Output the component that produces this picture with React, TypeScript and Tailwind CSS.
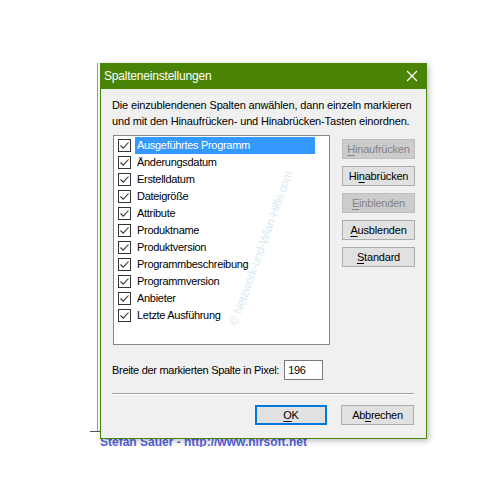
import React from "react";

const items = [
  "Ausgeführtes Programm",
  "Änderungsdatum",
  "Erstelldatum",
  "Dateigröße",
  "Attribute",
  "Produktname",
  "Produktversion",
  "Programmbeschreibung",
  "Programmversion",
  "Anbieter",
  "Letzte Ausführung",
];

function Check() {
  return (
    <span className="flex h-[13px] w-[13px] shrink-0 items-center justify-center border border-[#333] bg-white">
      <svg width="11" height="11" viewBox="0 0 11 11">
        <path d="M1.5 5.5 L4.2 8.2 L9.5 2.5" fill="none" stroke="#333" strokeWidth="1.1" />
      </svg>
    </span>
  );
}

function Btn({
  pre,
  key1,
  post,
  disabled,
}: {
  pre: string;
  key1: string;
  post: string;
  disabled?: boolean;
}) {
  return (
    <button
      className={
        disabled
          ? "h-[20px] w-[73px] whitespace-nowrap border border-[#bfbfbf] bg-[#cccccc] text-[11px] leading-none tracking-[-0.2px] text-[#838383]"
          : "h-[20px] w-[73px] whitespace-nowrap border border-[#adadad] bg-[#e1e1e1] text-[11px] leading-none tracking-[-0.2px] text-black"
      }
    >
      {pre}
      <span className="underline underline-offset-2">{key1}</span>
      {post}
    </button>
  );
}

export default function App() {
  return (
    <div
      className="relative h-[500px] w-[500px] overflow-hidden bg-white"
      style={{ fontFamily: '"Liberation Sans", Arial, sans-serif' }}
    >
      {/* window behind the dialog */}
      <div className="absolute left-[97px] top-[63px] h-[368px] w-px bg-[#9a9a9a]" />
      <div className="absolute left-[90px] top-[431px] h-px w-[10px] bg-[#555]" />
      <div className="absolute left-[100px] top-[439px] h-[8px] overflow-hidden">
        <div className="-mt-[6px] whitespace-nowrap text-[12px] font-bold text-[#2a3bd8] opacity-80">
          Stefan Sauer - http://www.nirsoft.net
        </div>
      </div>

      <div className="relative ml-[100px] mt-[63px] flex h-[376px] w-[327px] flex-col bg-[#4a8406] shadow-[2px_2px_6px_rgba(0,0,0,0.25)]">
        <div className="flex h-[26px] shrink-0 items-center justify-between pl-[4px] pr-[9px] text-white">
          <span className="text-[12px] tracking-[-0.2px]">Spalteneinstellungen</span>
          <svg width="12" height="12" viewBox="0 0 12 12">
            <path d="M1 1 L11 11 M11 1 L1 11" stroke="white" strokeWidth="1.2" />
          </svg>
        </div>
        <div className="mx-px mb-px flex flex-1 flex-col overflow-hidden bg-[#f0f0f0] pl-[11px] pr-[12px] pt-[8px] text-[11px] tracking-[-0.3px] text-black">
          <p className="whitespace-nowrap leading-[16px] tracking-[-0.15px]">
            Die einzublendenen Spalten anwählen, dann einzeln markieren
            <br />
            und mit den Hinaufrücken- und Hinabrücken-Tasten einordnen.
          </p>

          <div className="mt-[6px] flex items-start gap-[12px]">
            <div className="relative ml-px h-[210px] w-[217px] shrink-0 overflow-hidden border border-[#828790] bg-white pt-px">
              {items.map((t, i) => (
                <div key={t} className="flex h-[17px] items-center pl-[4px]">
                  <Check />
                  <span
                    className={
                      i === 0
                        ? "ml-[4px] flex h-[17px] w-[180px] items-center bg-[#3399ff] pl-[2px] text-white"
                        : "ml-[4px] pl-[2px]"
                    }
                  >
                    {t}
                  </span>
                </div>
              ))}
              <div className="pointer-events-none absolute left-[52px] top-[103px] w-[190px] -rotate-[70deg] whitespace-nowrap text-center text-[12px] text-[#c4dcec] opacity-60">
                © Netzwerk-und-Wlan-Hilfe.com
              </div>
            </div>
            <div className="mt-[4px] flex flex-col gap-[7px]">
              <Btn pre="" key1="H" post="inaufrücken" disabled />
              <Btn pre="Hi" key1="n" post="abrücken" />
              <Btn pre="" key1="E" post="inblenden" disabled />
              <Btn pre="" key1="A" post="usblenden" />
              <Btn pre="" key1="S" post="tandard" />
            </div>
          </div>

          <div className="mt-[15px] flex items-center gap-[5px]">
            <span>Breite der markierten Spalte in Pixel:</span>
            <div className="flex h-[20px] w-[39px] items-center border border-[#7a7a7a] bg-white pl-[3px]">
              196
            </div>
          </div>

          <div className="mt-[13px] h-[2px] border-b border-t border-b-white border-t-[#a0a0a0]" />

          <div className="mt-[10px] flex justify-end gap-[14px]">
            <button className="h-[20px] w-[72px] border-2 border-[#0078d7] bg-[#e1e1e1] text-[11px] leading-none">
              <span className="underline underline-offset-2">O</span>K
            </button>
            <button className="h-[20px] w-[73px] border border-[#adadad] bg-[#e1e1e1] text-[11px] leading-none">
              Ab<span className="underline underline-offset-2">b</span>rechen
            </button>
          </div>
        </div>
      </div>
    </div>
  );
}
